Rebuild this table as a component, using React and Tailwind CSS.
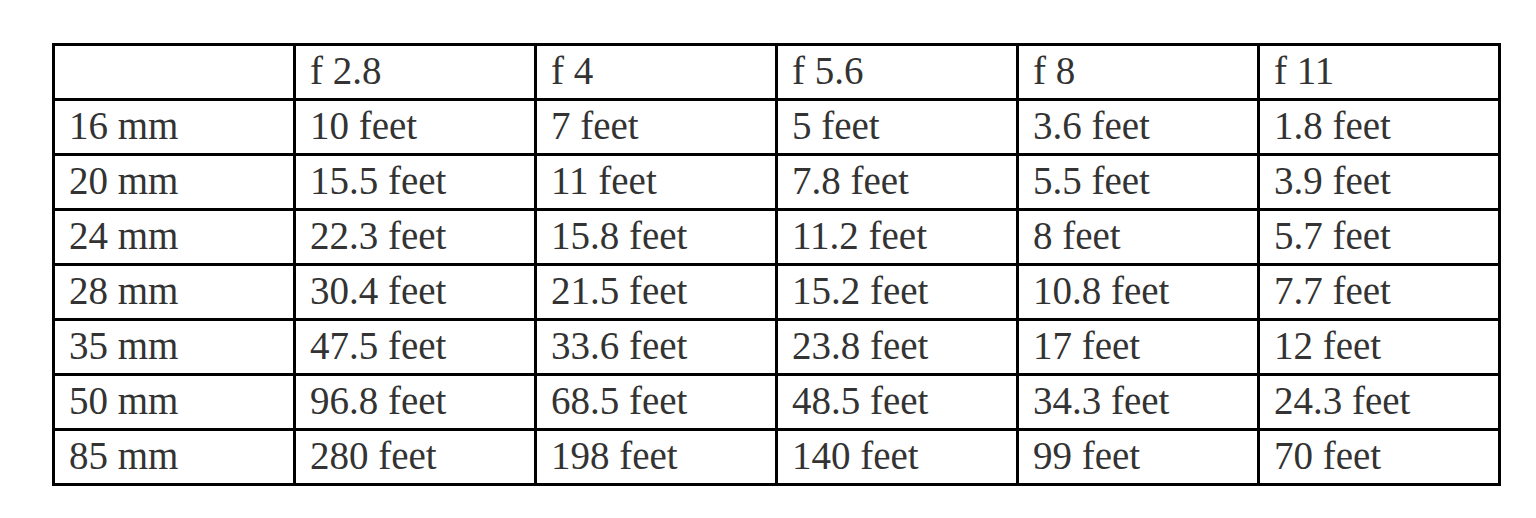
import React from "react";

const header = ["", "f 2.8", "f 4", "f 5.6", "f 8", "f 11"];
const rows = [
  ["16 mm", "10 feet", "7 feet", "5 feet", "3.6 feet", "1.8 feet"],
  ["20 mm", "15.5 feet", "11 feet", "7.8 feet", "5.5 feet", "3.9 feet"],
  ["24 mm", "22.3 feet", "15.8 feet", "11.2 feet", "8 feet", "5.7 feet"],
  ["28 mm", "30.4 feet", "21.5 feet", "15.2 feet", "10.8 feet", "7.7 feet"],
  ["35 mm", "47.5 feet", "33.6 feet", "23.8 feet", "17 feet", "12 feet"],
  ["50 mm", "96.8 feet", "68.5 feet", "48.5 feet", "34.3 feet", "24.3 feet"],
  ["85 mm", "280 feet", "198 feet", "140 feet", "99 feet", "70 feet"],
];

export default function App() {
  const all = [header, ...rows];
  return (
    <div className="w-[1536px] h-[518px] bg-white pt-[43px] pl-[52px]" style={{ fontFamily: '"Liberation Serif", "Times New Roman", serif' }}>
      <div className="grid grid-cols-[repeat(6,241px)] w-fit border-l-[3px] border-t-[3px] border-black">
        {all.map((r, i) =>
          r.map((c, j) => (
            <div
              key={i + "-" + j}
              className="h-[55px] border-r-[3px] border-b-[3px] border-black flex items-center pl-[14px] pb-[3px] text-[39px] leading-none text-[#333]"
            >
              {c}
            </div>
          ))
        )}
      </div>
    </div>
  );
}
